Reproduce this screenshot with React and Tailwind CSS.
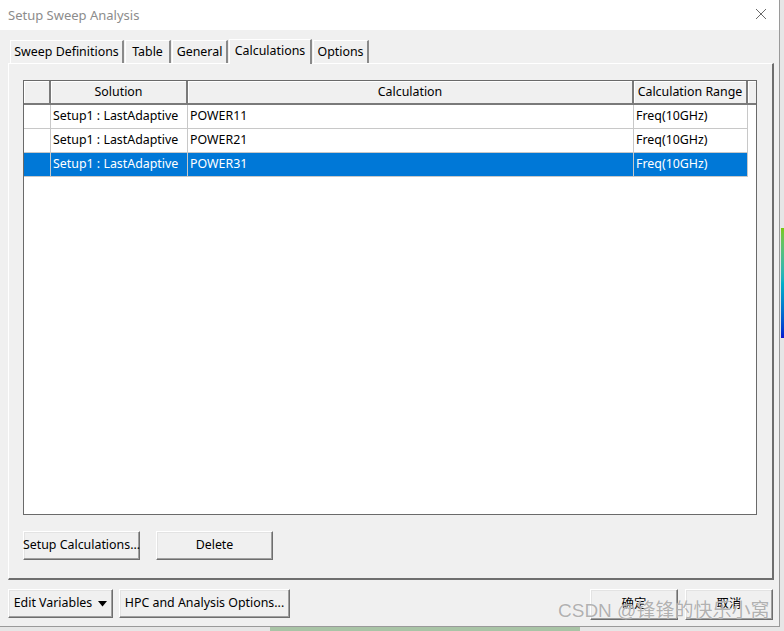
import React from "react";

const FONT = "font-['Noto_Sans','Liberation_Sans','Noto_Sans_CJK_SC',sans-serif]";

function Tab({ label, active, w }) {
  if (active) {
    return (
      <div
        className={`relative h-[25px] ${w} bg-[#f0f0f0] border-t border-l border-white border-r-2 border-r-[#8a8a8a] -mb-[1px] z-10 flex items-start justify-center pt-[2px] text-[12.4px] text-black`}
      >
        {label}
      </div>
    );
  }
  return (
    <div
      className={`h-[23px] ${w} bg-[#f0f0f0] border-t border-l border-white border-r-2 border-r-[#8a8a8a] flex items-center justify-center text-[12.4px] text-black`}
    >
      {label}
    </div>
  );
}

function HeadCell({ w, children }) {
  return (
    <div
      className={`${w} h-full shrink-0 bg-[#f0f0f0] border-r-2 border-b-2 border-[#7a7a7a] shadow-[inset_1px_1px_0_#ffffff] flex items-center justify-center text-[12.4px] text-black`}
    >
      {children}
    </div>
  );
}

function Row({ sol, calc, range, selected }) {
  const cell = selected ? "bg-[#0078d7] text-white" : "bg-white text-black";
  return (
    <div className="flex h-[24px] shrink-0">
      <div className={`w-[27px] shrink-0 border-r border-b border-[#c8c8c8] ${cell}`} />
      <div className={`w-[137px] shrink-0 border-r border-b border-[#c8c8c8] pl-[2px] flex items-center text-[12.4px] ${cell}`}>{sol}</div>
      <div className={`w-[446px] shrink-0 border-r border-b border-[#c8c8c8] pl-[2px] flex items-center text-[12.4px] ${cell}`}>{calc}</div>
      <div className={`w-[114px] shrink-0 border-r border-b border-[#c8c8c8] pl-[2px] flex items-center text-[12.4px] ${cell}`}>{range}</div>
      <div className="flex-1 bg-white" />
    </div>
  );
}

function Btn({ w, children, className = "" }) {
  return (
    <div
      className={`${w} h-[29px] shrink-0 bg-[#f0f0f0] border border-t-white border-l-white border-r-[#6e6e6e] border-b-[#6e6e6e] shadow-[inset_-1px_-1px_0_#a0a0a0,inset_1px_1px_0_#e3e3e3] flex items-center justify-center text-[12.4px] text-black whitespace-nowrap ${className}`}
    >
      {children}
    </div>
  );
}

export default function App() {
  return (
    <div className={`w-[784px] h-[631px] relative overflow-hidden bg-[#e6e6e6] ${FONT}`}>
      {/* background app hints */}
      <div className="absolute right-0 top-[228px] w-[3px] h-[110px] bg-gradient-to-b from-[#7ac800] via-[#00b0c8] to-[#1010d0]" />
      <div className="absolute left-[270px] bottom-0 w-[310px] h-[4px] bg-[#a9c4a6]" />

      <div className="w-[780px] h-[627px] bg-[#f0f0f0] border-r border-b border-[#9a9a9a] flex flex-col">
        {/* title bar */}
        <div className="h-[30px] shrink-0 bg-white flex items-center justify-between pl-[8px] pr-[12px]">
          <span className="text-[13px] text-[#8c8c8c] leading-none">Setup Sweep Analysis</span>
          <svg width="12" height="12" viewBox="0 0 12 12" className="mt-[-2px]">
            <path d="M1 1 L11 11 M11 1 L1 11" stroke="#6a6a6a" strokeWidth="1" fill="none" />
          </svg>
        </div>

        <div className="flex-1 flex flex-col pl-[8px] pr-[6px] pt-[8px]">
          {/* tabs */}
          <div className="h-[25px] shrink-0 flex items-end pl-[2px] gap-[1px]">
            <Tab label="Sweep Definitions" w="w-[114px]" />
            <Tab label="Table" w="w-[46px]" />
            <Tab label="General" w="w-[56px]" />
            <Tab label="Calculations" w="w-[83px]" active />
            <Tab label="Options" w="w-[56px]" />
          </div>

          {/* panel */}
          <div className="w-[766px] h-[517px] shrink-0 border-t border-l border-white border-r-2 border-b-2 border-r-[#6e6e6e] border-b-[#6e6e6e] pl-[14px] pt-[16px] flex flex-col">
            <div className="w-[734px] h-[435px] border border-[#6a6a6a] bg-white flex flex-col">
              <div className="h-[24px] shrink-0 flex">
                <HeadCell w="w-[27px]" />
                <HeadCell w="w-[137px]">Solution</HeadCell>
                <HeadCell w="w-[446px]">Calculation</HeadCell>
                <HeadCell w="w-[114px]">Calculation Range</HeadCell>
                <div className="flex-1 h-full bg-[#f0f0f0] border-b-2 border-[#7a7a7a] shadow-[inset_1px_1px_0_#ffffff]" />
              </div>
              <Row sol="Setup1 : LastAdaptive" calc="POWER11" range="Freq(10GHz)" />
              <Row sol="Setup1 : LastAdaptive" calc="POWER21" range="Freq(10GHz)" />
              <Row sol="Setup1 : LastAdaptive" calc="POWER31" range="Freq(10GHz)" selected />
              <div className="flex-1 bg-white" />
            </div>

            <div className="flex gap-[16px] mt-[16px]">
              <Btn w="w-[117px]">Setup Calculations...</Btn>
              <Btn w="w-[117px]">Delete</Btn>
            </div>
          </div>

          {/* bottom buttons */}
          <div className="flex mt-[9px]">
            <Btn w="w-[105px]" className="gap-[6px]">
              <span>Edit Variables</span>
              <svg width="9" height="6" viewBox="0 0 9 6"><path d="M0 0 H9 L4.5 5.5 Z" fill="#000" /></svg>
            </Btn>
            <Btn w="w-[171px]" className="ml-[6px]">HPC and Analysis Options...</Btn>
            <div className="flex-1" />
            <Btn w="w-[88px]" className="h-[31px]">确定</Btn>
            <Btn w="w-[88px]" className="ml-[7px] h-[31px]">取消</Btn>
          </div>
        </div>
      </div>

      {/* watermark */}
      <div className="absolute left-[558px] top-[601px] text-[19px] leading-none text-[#9c9c9c]/80 [text-shadow:0_0_1px_#ffffff] whitespace-nowrap font-['Liberation_Sans','Noto_Sans_CJK_SC',sans-serif]">
        CSDN @锋锋的快乐小窝
      </div>
    </div>
  );
}
